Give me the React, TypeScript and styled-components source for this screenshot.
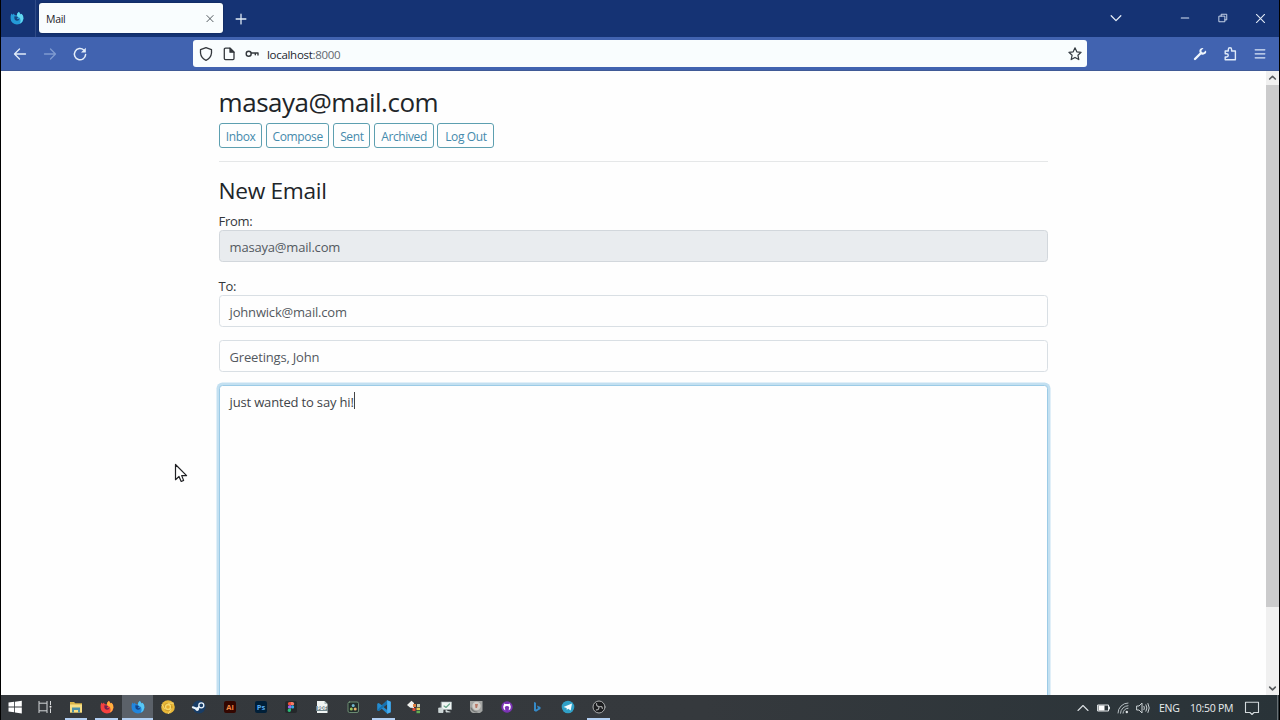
import React from "react";
import styled, { createGlobalStyle } from "styled-components";

const Global = createGlobalStyle`
  * { box-sizing: border-box; }
  html, body { margin: 0; padding: 0; overflow: hidden; background: #000; }
  body { font-family: "Open Sans", "Noto Sans", sans-serif; }
  svg { display: block; flex: none; }
`;

const Screen = styled.div`
  position: relative;
  width: 1280px;
  height: 720px;
  padding: 0 1px;
  display: flex;
  flex-direction: column;
  overflow: hidden;
  background: #000;
`;

/* Browser chrome */
const TabStrip = styled.div`
  height: 37px;
  flex: none;
  display: flex;
  align-items: center;
  background: #153374;
`;
const PinnedTab = styled.div`
  width: 35px;
  height: 37px;
  padding: 10px 0 0 8px;
  border-right: 1px solid #304b86;
`;
const Tab = styled.div`
  width: 184px;
  height: 30px;
  margin: 0 0 1px 3px;
  padding: 0 8px 0 7px;
  display: flex;
  align-items: center;
  justify-content: space-between;
  border-radius: 3px;
  background: #f9fdfe;
  box-shadow: 0 0 2px rgba(0, 0, 0, 0.4);
`;
const TabTitle = styled.span`
  font-size: 10.5px;
  line-height: 14px;
  letter-spacing: -0.3px;
  color: #1c2027;
  padding-top: 1px;
`;
const NewTab = styled.div`
  margin-left: 12px;
`;
const WindowControls = styled.div`
  margin-left: auto;
  margin-right: 12px;
  display: flex;
  align-items: center;
  padding-bottom: 1px;
`;
const Control = styled.div<{ $gap: number }>`
  margin-left: ${(p) => p.$gap}px;
`;
const Toolbar = styled.div`
  height: 34px;
  flex: none;
  display: flex;
  align-items: center;
  padding-left: 11px;
  background: #4163b0;
  border-bottom: 1px solid #405a96;
`;
const NavButtons = styled.div`
  width: 181px;
  display: flex;
  gap: 14px;
`;
const AddressBar = styled.div`
  width: 894px;
  height: 27px;
  padding: 0 4px 0 5px;
  display: flex;
  align-items: center;
  border-radius: 3px;
  background: #f9fdfe;
`;
const AddressIcons = styled.div`
  display: flex;
  gap: 7px;
`;
const Url = styled.span`
  margin-left: 7px;
  flex: 1;
  font-size: 11.5px;
  line-height: 16px;
  padding-top: 2px;
  letter-spacing: -0.3px;
  color: #23272e;
`;
const Port = styled.span`
  color: #62676d;
`;
const ToolbarActions = styled.div`
  margin-left: 105px;
  display: flex;
  gap: 14px;
`;

/* Page */
const Viewport = styled.div`
  height: 624px;
  flex: none;
  display: flex;
  background: #fefefe;
  overflow: hidden;
`;
const Page = styled.main`
  flex: 1;
  padding: 14px 0 0 217.6px;
  overflow: hidden;
`;
const Container = styled.div`
  width: 829px;
`;
const Account = styled.h2`
  margin: 0;
  height: 38px;
  font-weight: 400;
  font-size: 26px;
  line-height: 34px;
  letter-spacing: -0.48px;
  color: #212529;
`;
const Actions = styled.nav`
  display: flex;
  gap: 3.6px;
`;
const ActionButton = styled.button<{ $width: number }>`
  width: ${(p) => p.$width}px;
  height: 25px;
  padding: 2px 0 0;
  border: 1px solid #5d9fb0;
  border-radius: 3px;
  background: #fefefe;
  color: #458aac;
  font-family: inherit;
  font-size: 12px;
  line-height: 18px;
  letter-spacing: -0.38px;
  text-indent: 0.6px;
  white-space: nowrap;
`;
const Rule = styled.hr`
  margin: 13px 0 14px;
  height: 1px;
  border: 0;
  background: #e5e7e8;
`;
const Title = styled.h3`
  margin: 0;
  height: 37px;
  font-weight: 400;
  font-size: 22.7px;
  line-height: 30px;
  letter-spacing: -0.33px;
  color: #212529;
`;
const Group = styled.div<{ $gap?: number }>`
  margin-bottom: ${(p) => p.$gap ?? 13}px;
`;
const Label = styled.label`
  display: block;
  height: 17px;
  font-size: 13px;
  line-height: 17px;
  letter-spacing: -0.3px;
  color: #33373b;
`;
const Field = styled.div<{ $disabled?: boolean }>`
  height: 32px;
  padding: 1px 10px 0;
  border: 1px solid ${(p) => (p.$disabled ? "#d2d7dc" : "#d9dfe4")};
  border-radius: 3.5px;
  background: ${(p) => (p.$disabled ? "#e9ecef" : "#fefefe")};
  color: #54595f;
  font-size: 13px;
  line-height: 31px;
  letter-spacing: -0.19px;
`;
const Message = styled.div`
  height: 360px;
  padding: 6px 10px;
  border: 1px solid #9ccbe6;
  border-radius: 3.5px;
  box-shadow: 0 0 0 2.5px #c3e0f1;
  background: #fefefe;
  color: #3f4449;
  font-size: 13px;
  line-height: 20px;
  letter-spacing: -0.17px;
  display: flex;
`;
const Caret = styled.span`
  width: 1px;
  height: 17px;
  margin-left: 0.8px;
  background: #444;
`;
const ScrollBar = styled.div`
  width: 13px;
  display: flex;
  flex-direction: column;
  background: #f0f0f0;
`;
const ScrollArrow = styled.div<{ $end?: boolean }>`
  height: 14px;
  margin-top: ${(p) => (p.$end ? "auto" : 0)};
  display: flex;
  align-items: center;
  justify-content: center;
`;
const ScrollThumb = styled.div`
  height: 522px;
  background: #cbcbcc;
`;
const Pointer = styled.div`
  position: absolute;
  left: 174px;
  top: 463px;
`;

/* Taskbar */
const TaskBar = styled.footer`
  height: 25px;
  flex: none;
  display: flex;
  justify-content: space-between;
  background: linear-gradient(90deg, #34383c, #35393d 55%, #293338);
`;
const Apps = styled.div`
  display: grid;
  grid-template-columns: repeat(20, 30.75px);
  margin-left: -1.8px;
`;
const AppSlot = styled.div<{ $state?: "running" | "active" }>`
  display: flex;
  justify-content: center;
  padding-top: 4px;
  position: relative;
  background: ${(p) => (p.$state === "active" ? "#5b6169" : "transparent")};
  &::after {
    content: "";
    display: ${(p) => (p.$state ? "block" : "none")};
    position: absolute;
    bottom: 0;
    left: ${(p) => (p.$state === "active" ? 0 : 4)}px;
    right: ${(p) => (p.$state === "active" ? 0 : 4)}px;
    height: 2px;
    background: #b3d0f3;
  }
`;
const Tray = styled.div`
  display: flex;
  align-items: center;
  color: #e9edef;
  font-size: 10.5px;
  letter-spacing: -0.25px;
`;
const TrayIcons = styled.div`
  display: flex;
  gap: 4px;
`;
const TrayText = styled.span<{ $left: number; $width: number }>`
  margin-left: ${(p) => p.$left}px;
  width: ${(p) => p.$width}px;
  white-space: nowrap;
`;
const Notifications = styled.div`
  margin-left: 14px;
  padding-right: 17px;
  border-right: 1px solid #6a7175;
  height: 25px;
  display: flex;
  align-items: center;
  margin-right: 1px;
`;

type IconProps = {
  size?: number;
  color?: string;
  width?: number;
  children: React.ReactNode;
};
const Icon = ({ size = 16, color = "none", width = 1.2, children }: IconProps) => (
  <svg width={size} height={size} viewBox="0 0 16 16" fill="none" stroke={color} strokeWidth={width} strokeLinecap="round" strokeLinejoin="round">
    {children}
  </svg>
);

const Letters = styled.text`
  font-family: "Open Sans", sans-serif;
  font-weight: 700;
  text-anchor: middle;
`;

const Flame = ({ body, swirl, core }: { body: string; swirl: string; core: string }) => (
  <Icon>
    <path d="M2.4 3.4Q3.2 4 3.6 4.8L5 3.4Q5 4.6 6 5.2L7.8 5.4Q8 3 10 1.8 10.2 3.2 11.8 4.4L12.6 3.8Q14.8 6 14.4 8.8A6.4 5.7 0 0 1 1.6 8.8Q1.2 5.8 2.4 3.4Z" fill={body} />
    <path d="M10 1.8Q10.2 3.2 11.8 4.4L12.6 3.8Q14.8 6 14.4 8.8 13.8 12.2 10.8 13.7 12.4 10.6 11 8 8 6.6 7.8 5.4 8 3 10 1.8Z" fill={swirl} />
    <path d="M5.4 6.2 7.8 6.4 9.2 7.4 7.8 8.2Q7.8 9.4 9.2 9.2L10.6 8.6Q10.2 11 7.8 10.8 4.8 10.2 5.4 6.2Z" fill={core} />
  </Icon>
);

const apps: { state?: "running" | "active"; icon: React.ReactNode }[] = [
  { icon: <Icon><path d="M1.5 3.6 7.2 2.8V7.6H1.5ZM8 2.7 14.8 1.7V7.6H8ZM1.5 8.4H7.2V13.3L1.5 12.5ZM8 8.4H14.8V14.4L8 13.4Z" fill="#fff" /></Icon> },
  { icon: <Icon color="#d4d7d9" width={1}><path d="M2 2V4.2H10V2M2 14V11.8H10V14M2 4.2V11.8M10 4.2V11.8M13.5 2V6M13.5 9.5V14" strokeLinecap="butt" /><circle cx="13.5" cy="7.7" r="1" fill="#eee" stroke="none" /></Icon> },
  { state: "running", icon: <Icon><path d="M2 3H6L7.3 4.3H14V13.5H2Z" fill="#d9b448" /><path d="M2 5.5H14V13.5H2Z" fill="#f7df85" /><path d="M4 8.5H12V13.5H10V11H6V13.5H4Z" fill="#4d91a8" /></Icon> },
  { state: "running", icon: <Flame body="#f5403f" swirl="#ffb03e" core="#6e2450" /> },
  { state: "active", icon: <Flame body="#2186de" swirl="#58c8f4" core="#15458a" /> },
  { icon: <Icon><circle cx="8" cy="8" r="6.8" fill="#e8b838" /><circle cx="8" cy="8" r="3.8" fill="#f7da68" stroke="#c18b1d" strokeWidth=".8" /><circle cx="8" cy="8" r="1.8" fill="#e4aa2b" /><path d="M8 4.2H13.6M4.7 10 2 5.5M11.3 10 8.5 14.6" stroke="#ffe183" strokeWidth=".8" /></Icon> },
  { icon: <Icon><circle cx="8" cy="8" r="6.5" fill="#183d66" /><path d="M1.8 8.2 6.3 10 8.5 7.5" stroke="#e8f3fb" strokeWidth="2" /><circle cx="10.3" cy="6.3" r="2.5" fill="#183d66" stroke="#edf5fb" strokeWidth="1.3" /><circle cx="6.2" cy="10.3" r="1.7" fill="#edf5fb" /></Icon> },
  { icon: <Icon><rect x="2" y="2" width="12" height="12" rx="2" fill="#330600" /><Letters x="8" y="11" fontSize="7.5" fill="#f58a42">Ai</Letters></Icon> },
  { icon: <Icon><rect x="2" y="2" width="12" height="12" rx="2" fill="#001f38" /><Letters x="8" y="11" fontSize="7.5" fill="#55aaf0">Ps</Letters></Icon> },
  { icon: <Icon><rect x="2" y="2" width="12" height="12" rx="2" fill="#24282a" /><path d="M8 3H6.5a1.65 1.65 0 0 0 0 3.3H8Z" fill="#ef5039" /><path d="M8 3h1.5a1.65 1.65 0 0 1 0 3.3H8Z" fill="#f57d68" /><path d="M8 6.3H6.5a1.65 1.65 0 0 0 0 3.3H8Z" fill="#a063ed" /><circle cx="9.6" cy="7.9" r="1.6" fill="#35abe9" /><path d="M8 9.6H6.5A1.7 1.7 0 1 0 8 11.3Z" fill="#29bd79" /></Icon> },
  { icon: <Icon><path d="M3 2H10.5L13.5 5V14H3Z" fill="#f0f4f3" /><path d="M10.5 2V5H13.5Z" fill="#a9b8ba" /><path d="M2 7H14V12H2Z" fill="#71858b" /><Letters x="8" y="11.4" fontSize="5" fill="#fff">PDF</Letters></Icon> },
  { icon: <Icon><rect x="3" y="3" width="10.5" height="10.5" rx="1.5" fill="#222d2c" stroke="#7ba182" strokeWidth=".8" /><circle cx="8.2" cy="6.4" r="1.5" fill="#73b9d0" /><circle cx="6.3" cy="10" r="1.5" fill="#9bc75c" /><circle cx="10.2" cy="10" r="1.5" fill="#e6b16e" /></Icon> },
  { state: "running", icon: <Icon><path d="M11.2 1.2 14.7 2.8V13.2L11.2 14.8 5.8 9.7 2.7 12 1.2 11.2V4.8L2.7 4 5.8 6.3Z" fill="#238bd0" /><path d="M11.2 5.1V10.9L7.4 8Z" fill="#34383c" /><path d="M1.2 11.2 11.2 1.2V5.1L2.7 12Z" fill="#1671ae" /><path d="M11.2 1.2 14.7 2.8V13.2L11.2 14.8Z" fill="#46adf0" /></Icon> },
  { icon: <Icon><path d="M1 6 5.5 1.8 8 4V9L4.3 8.7Z" fill="#f0f1ed" /><path d="M7 5H10V8H7Z" fill="#dc7f42" /><path d="M11 5H14V8H11Z" fill="#c3ccb2" /><path d="M6.5 9H9.5V12H6.5Z" fill="#db4938" /><path d="M10.5 8.7H14V11H10.5Z" fill="#e9ce54" /><path d="M10.5 11.7H14V14.2H10.5Z" fill="#63ac53" /></Icon> },
  { icon: <Icon><path d="M4.5 3H14.5V10.5H4.5Z" fill="#f0f5f4" stroke="#aab7b9" strokeWidth=".6" /><path d="M7 7 9 8.5 12.5 5" stroke="#68a78b" /><path d="M2 9H6V13.5H2ZM9 11V13H13" fill="#ccd5d5" stroke="#d7dfdf" strokeWidth=".8" /></Icon> },
  { icon: <Icon><path d="M2 2H14.5V12L12 14H5Q2 13 2 10Z" fill="#a3a5a3" /><circle cx="8.5" cy="7" r="4.2" fill="#d2cfca" /><path d="M7 5H10L9 9H7.5Z" fill="#ba7967" /><path d="M3 9Q5 13 9 13" stroke="#737574" /></Icon> },
  { icon: <Icon><circle cx="8" cy="8" r="5.7" fill="#7b32b5" /><path d="M6.2 11.5Q4.2 10.3 4.2 7.9 4.2 6.8 4.9 6V4.4L6.5 5.1H9.5L11.1 4.4V6Q11.8 6.8 11.8 7.9 11.8 10.3 9.8 11.5V9.7Q10.4 9 10.1 7.9 9.4 7 8 7 6.6 7 5.9 7.9 5.6 9 6.2 9.7Z" fill="#fff" /></Icon> },
  { icon: <Icon><path d="M5 3 7 3.8V10.6L9 9.3 7.8 6.5 11.5 8V10L7 12.8 5 11.7Z" fill="#358ac8" /></Icon> },
  { icon: <Icon><circle cx="8" cy="8" r="6.3" fill="#30a0c6" /><path d="M3.5 8 12 4.6 10.7 11.6 8.2 9.8 6.8 11 6.6 9Z" fill="#f5fcff" /></Icon> },
  { state: "running", icon: <Icon><circle cx="8" cy="8" r="6" fill="#1c1d1f" stroke="#aaacad" strokeWidth="1" /><path d="M8 7.7Q5 7 5.6 4.6M8.2 8Q11 6.6 11.4 9.3M7.8 8.2Q8 11 5.4 10.9" stroke="#a5a7a8" strokeWidth="1.2" /></Icon> },
];

const actions: [string, number][] = [
  ["Inbox", 43.4],
  ["Compose", 63.6],
  ["Sent", 37.6],
  ["Archived", 59.6],
  ["Log Out", 57],
];

export default function App() {
  return (
    <Screen>
      <Global />
      <TabStrip>
        <PinnedTab><Flame body="#249bd8" swirl="#62d7ef" core="#174580" /></PinnedTab>
        <Tab>
          <TabTitle>Mail</TabTitle>
          <Icon size={10} color="#4c5258" width={1.5}><path d="M3 4 13 14M13 4 3 14" /></Icon>
        </Tab>
        <NewTab><Icon size={12} color="#e1edf6" width={1.7}><path d="M8 1.5V14.5M1.5 8H14.5" /></Icon></NewTab>
        <WindowControls>
          <Control $gap={0}><Icon size={14} color="#e4ecf6" width={1.5}><path d="M2.5 5.5 8 11 13.5 5.5" /></Icon></Control>
          <Control $gap={56.5}><Icon size={12} color="#d9e4f4" width={1.4}><path d="M3 8H13" /></Icon></Control>
          <Control $gap={26}><Icon size={12} color="#d9e4f4" width={1.2}><path d="M3 5.5H10.5V13H3ZM5.5 5.5V3H13V10.5H10.5" /></Icon></Control>
          <Control $gap={25}><Icon size={13} color="#e2ebf7" width={1.3}><path d="M3 3 13 13M13 3 3 13" /></Icon></Control>
        </WindowControls>
      </TabStrip>
      <Toolbar>
        <NavButtons>
          <Icon color="#e1ecf8" width={1.3}><path d="M13.5 8H2.5M7.5 3 2.5 8 7.5 13" /></Icon>
          <Icon color="#7f9bd0" width={1.3}><path d="M2.5 8H13.5M8.5 3 13.5 8 8.5 13" /></Icon>
          <Icon color="#e4eefa" width={1.5}><path d="M13.6 8.6A5.6 5.6 0 1 1 11.8 4" /><path d="M13.8 1.8V6.6H9Z" fill="#e4eefa" stroke="none" /></Icon>
        </NavButtons>
        <AddressBar>
          <AddressIcons>
            <Icon color="#33383d" width={1.3}><path d="M8 1.7 13.5 3.7V7Q13 12 8 14.3 3 12 2.5 7V3.7Z" /></Icon>
            <Icon color="#33383d" width={1.3}><path d="M4.5 2.2H9L13 6.2V12.6Q13 13.7 12 13.7H4.5Q3.3 13.7 3.3 12.6V3.3Q3.3 2.2 4.5 2.2Z" /><path d="M9 2.2V6.2H13Z" fill="#33383d" /></Icon>
            <Icon color="#33383d" width={1.4}><circle cx="4.7" cy="7.7" r="2.5" /><path d="M7.2 7H14V9M11.3 7V8.7" /></Icon>
          </AddressIcons>
          <Url>localhost<Port>:8000</Port></Url>
          <Icon color="#343b42" width={1.2}><path d="M8 1.8 9.8 5.8 14.1 6.3 10.9 9.2 11.8 13.6 8 11.4 4.2 13.6 5.1 9.2 1.9 6.3 6.2 5.8Z" /></Icon>
        </AddressBar>
        <ToolbarActions>
          <Icon color="#eef5fc" width={2.4}><path d="M3 13 9 7" /><path d="M13.9 4.5 11.5 6.5 9.7 6.3 9.4 4.4 11.5 2.1Q8.8 1.3 7.6 3.7 7 5.2 7.7 6.6L9.4 8.4Q11 9 12.7 8.1 14.9 7 13.9 4.5Z" fill="#eef5fc" stroke="none" /></Icon>
          <Icon color="#e0ebf9" width={1.4}><path d="M3.2 7.5V5H6.3V3.4A1.6 1.6 0 0 1 9.6 3.4V5H13.4V13.8H3.2V11H4.6A1.6 1.6 0 0 0 4.6 7.7H3.2" /></Icon>
          <Icon color="#dce7f7" width={1.3}><path d="M3.2 3.8H12.8M3.2 7.8H12.8M3.2 11.8H12.8" /></Icon>
        </ToolbarActions>
      </Toolbar>

      <Viewport>
        <Page>
          <Container>
            <Account>masaya@mail.com</Account>
            <Actions>
              {actions.map(([name, width]) => (
                <ActionButton key={name} $width={width}>{name}</ActionButton>
              ))}
            </Actions>
            <Rule />
            <Title>New Email</Title>
            <Group $gap={16}>
              <Label>From:</Label>
              <Field $disabled>masaya@mail.com</Field>
            </Group>
            <Group>
              <Label>To:</Label>
              <Field>johnwick@mail.com</Field>
            </Group>
            <Group>
              <Field>Greetings, John</Field>
            </Group>
            <Message>just wanted to say hi!<Caret /></Message>
          </Container>
        </Page>
        <ScrollBar>
          <ScrollArrow><Icon size={9} color="#55585b" width={2.8}><path d="M3 9 8 4 13 9" /></Icon></ScrollArrow>
          <ScrollThumb />
          <ScrollArrow $end><Icon size={9} color="#55585b" width={2.8}><path d="M3 5.5 8 10.5 13 5.5" /></Icon></ScrollArrow>
        </ScrollBar>
      </Viewport>

      <TaskBar>
        <Apps>
          {apps.map((app, i) => (
            <AppSlot key={i} $state={app.state}>{app.icon}</AppSlot>
          ))}
        </Apps>
        <Tray>
          <TrayIcons>
            <Icon color="#d9dee1" width={1.1}><path d="M3 10.5 8 5.5 13 10.5" /></Icon>
            <Icon color="#e3e7e9" width={1}><path d="M3 5H13.5V11H3ZM14.5 7V9" /><path d="M3.5 5.5H9.5V10.5H3.5Z" fill="#fff" stroke="none" /></Icon>
            <Icon color="#b8c0c4" width={1}><path d="M3 13A10 10 0 0 1 13 3M5.5 13.2A7.7 7.7 0 0 1 13 5.7M8 13.2A5 5 0 0 1 13 8.2" /><circle cx="11.8" cy="12" r="1.2" fill="#e2e6e8" stroke="none" /></Icon>
            <Icon color="#c9d0d3" width={1}><path d="M2 6H4L7 3V13L4 10H2ZM9 6.3Q10 8 9 9.7M11 4.8Q13 8 11 11.2M13 3.5Q15.6 8 13 12.5" /></Icon>
          </TrayIcons>
          <TrayText $left={8} $width={21}>ENG</TrayText>
          <TrayText $left={10} $width={40}>10:50 PM</TrayText>
          <Notifications><Icon color="#d4dadd" width={1.1}><path d="M1.5 2.3H14.5V12.5H10L8 14.5 6 12.5H1.5Z" /></Icon></Notifications>
        </Tray>
      </TaskBar>
      <Pointer>
        <svg width="15" height="21" viewBox="0 0 15 21">
          <path d="M1.5 1.5V16.7L5 13.5 7.2 18.5 9.6 17.4 7.7 12.6H12.6Z" fill="#fff" stroke="#202124" strokeWidth="1.2" strokeLinejoin="round" />
        </svg>
      </Pointer>
    </Screen>
  );
}
